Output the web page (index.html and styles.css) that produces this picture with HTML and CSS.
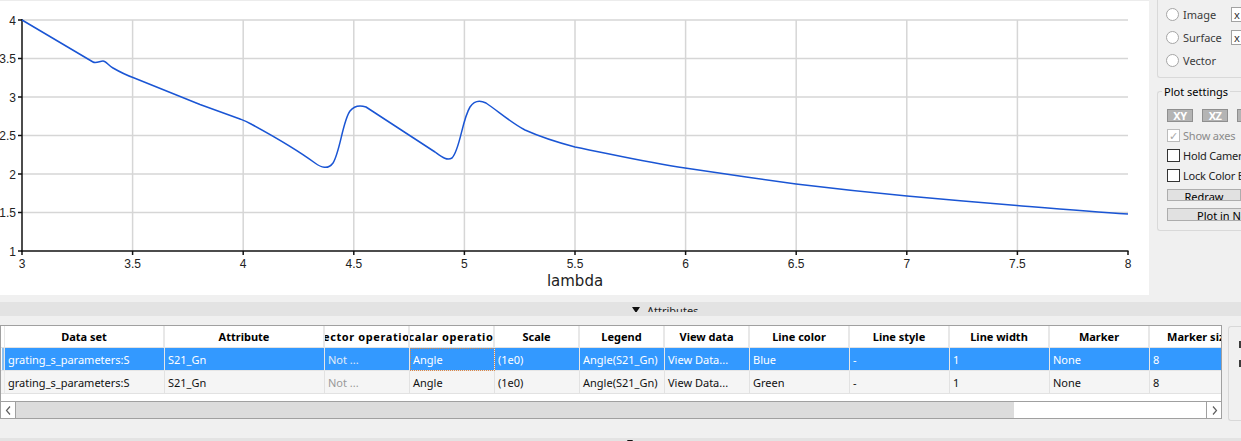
FILE: index.html
```html
<!DOCTYPE html>
<html>
<head>
<meta charset="utf-8">
<link rel="stylesheet" href="styles.css">
</head>
<body>
<div class="top">
  <div class="plot">
    <svg width="1149" height="295" viewBox="0 0 1149 295">
      <line x1="0" y1="0.5" x2="1149" y2="0.5" stroke="#ececec"/>
      <g stroke="#d6d6d6" stroke-width="1.5">
        <line x1="22" y1="20" x2="1128" y2="20"/>
        <line x1="22" y1="58.5" x2="1128" y2="58.5"/>
        <line x1="22" y1="97" x2="1128" y2="97"/>
        <line x1="22" y1="135.5" x2="1128" y2="135.5"/>
        <line x1="22" y1="174" x2="1128" y2="174"/>
        <line x1="22" y1="212.5" x2="1128" y2="212.5"/>
        <line x1="132.6" y1="20" x2="132.6" y2="251"/>
        <line x1="243.2" y1="20" x2="243.2" y2="251"/>
        <line x1="353.8" y1="20" x2="353.8" y2="251"/>
        <line x1="464.4" y1="20" x2="464.4" y2="251"/>
        <line x1="575" y1="20" x2="575" y2="251"/>
        <line x1="685.6" y1="20" x2="685.6" y2="251"/>
        <line x1="796.2" y1="20" x2="796.2" y2="251"/>
        <line x1="906.8" y1="20" x2="906.8" y2="251"/>
        <line x1="1017.4" y1="20" x2="1017.4" y2="251"/>
      </g>
      <g stroke="#111" stroke-width="1.5">
        <line x1="22" y1="19" x2="22" y2="252"/>
        <line x1="21" y1="251" x2="1128.5" y2="251"/>
        <line x1="18" y1="20" x2="22" y2="20"/>
        <line x1="18" y1="58.5" x2="22" y2="58.5"/>
        <line x1="18" y1="97" x2="22" y2="97"/>
        <line x1="18" y1="135.5" x2="22" y2="135.5"/>
        <line x1="18" y1="174" x2="22" y2="174"/>
        <line x1="18" y1="212.5" x2="22" y2="212.5"/>
        <line x1="18" y1="251" x2="22" y2="251"/>
        <line x1="22" y1="251" x2="22" y2="255"/>
        <line x1="132.6" y1="251" x2="132.6" y2="255"/>
        <line x1="243.2" y1="251" x2="243.2" y2="255"/>
        <line x1="353.8" y1="251" x2="353.8" y2="255"/>
        <line x1="464.4" y1="251" x2="464.4" y2="255"/>
        <line x1="575" y1="251" x2="575" y2="255"/>
        <line x1="685.6" y1="251" x2="685.6" y2="255"/>
        <line x1="796.2" y1="251" x2="796.2" y2="255"/>
        <line x1="906.8" y1="251" x2="906.8" y2="255"/>
        <line x1="1017.4" y1="251" x2="1017.4" y2="255"/>
        <line x1="1128" y1="251" x2="1128" y2="255"/>
      </g>
      <g class="ylab" text-anchor="end">
        <text x="16" y="24.5">4</text>
        <text x="16" y="63">3.5</text>
        <text x="16" y="101.5">3</text>
        <text x="16" y="140">2.5</text>
        <text x="16" y="178.5">2</text>
        <text x="16" y="217">1.5</text>
        <text x="16" y="255.5">1</text>
      </g>
      <g class="xlab" text-anchor="middle">
        <text x="22" y="268">3</text>
        <text x="132.6" y="268">3.5</text>
        <text x="243.2" y="268">4</text>
        <text x="353.8" y="268">4.5</text>
        <text x="464.4" y="268">5</text>
        <text x="575" y="268">5.5</text>
        <text x="685.6" y="268">6</text>
        <text x="796.2" y="268">6.5</text>
        <text x="906.8" y="268">7</text>
        <text x="1017.4" y="268">7.5</text>
        <text x="1128" y="268">8</text>
      </g>
      <text class="axtitle" x="575" y="286" text-anchor="middle">lambda</text>
      <path class="curve" d="M22,20 L93,62 C96,63.8 100,61 103,61 C106,61 108,65 113,68 C120,72 126,75 133,77.5 L200,104.5 L240,119 C244,120.5 247,121.5 252,124.5 C275,137 300,152 315,163 C321,167.5 328,170 333,163 C340,152 343,120 350,111 C354,106 360,105 366,107 L435,152 C442,157 447,161 452,158 C460,150 462,120 470,107 C474,101 480,100 486,103 C498,111 510,122 525,130 C545,139 560,143 575,147 C620,156 650,163 685,168 C720,173 760,179 796,184 C833,188.5 870,192.5 907,196 C944,199.5 980,202.5 1017,205.5 C1054,208.5 1090,211.5 1128,214"/>
    </svg>
  </div>
  <div class="side">
    <div class="group g1">
      <div class="opt"><span class="radio"></span><span class="lbl">Image</span><span class="tb">x</span></div>
      <div class="opt"><span class="radio"></span><span class="lbl">Surface</span><span class="tb">x</span></div>
      <div class="opt"><span class="radio"></span><span class="lbl">Vector</span></div>
    </div>
    <div class="group g2">
      <div class="legend">Plot settings</div>
      <div class="views"><span class="vbtn">XY</span><span class="vbtn">XZ</span><span class="vbtn">YZ</span></div>
      <div class="chk dis"><span class="box on">&#10003;</span><span>Show axes</span></div>
      <div class="chk"><span class="box"></span><span>Hold Camera</span></div>
      <div class="chk"><span class="box"></span><span>Lock Color Bar</span></div>
      <div class="btn b1"><span>Redraw</span></div>
      <div class="btn b2"><span>Plot in New Window</span></div>
    </div>
  </div>
</div>
<div class="bottom">
  <div class="bar"><div class="barclip"><span class="tri"></span><span>Attributes</span></div></div>
  <div class="content">
    <div class="grid">
      <div class="rows">
        <div class="row head">
          <div class="c stub"></div>
          <div class="c w160"><span>Data set</span></div>
          <div class="c w160"><span>Attribute</span></div>
          <div class="c w85"><span class="wide">Vector operation</span></div>
          <div class="c w85"><span class="wide">Scalar operation</span></div>
          <div class="c w85"><span>Scale</span></div>
          <div class="c w85"><span>Legend</span></div>
          <div class="c w85"><span>View data</span></div>
          <div class="c w100"><span>Line color</span></div>
          <div class="c w100"><span>Line style</span></div>
          <div class="c w100"><span>Line width</span></div>
          <div class="c w100"><span>Marker</span></div>
          <div class="c w100"><span>Marker size</span></div>
        </div>
        <div class="row sel">
          <div class="c stub"></div>
          <div class="c w160">grating_s_parameters:S</div>
          <div class="c w160">S21_Gn</div>
          <div class="c w85 dim">Not ...</div>
          <div class="c w85 focus">Angle</div>
          <div class="c w85">(1e0)</div>
          <div class="c w85">Angle(S21_Gn)</div>
          <div class="c w85">View Data...</div>
          <div class="c w100">Blue</div>
          <div class="c w100">-</div>
          <div class="c w100">1</div>
          <div class="c w100">None</div>
          <div class="c w100">8</div>
        </div>
        <div class="row alt">
          <div class="c stub"></div>
          <div class="c w160">grating_s_parameters:S</div>
          <div class="c w160">S21_Gn</div>
          <div class="c w85 dim">Not ...</div>
          <div class="c w85">Angle</div>
          <div class="c w85">(1e0)</div>
          <div class="c w85">Angle(S21_Gn)</div>
          <div class="c w85">View Data...</div>
          <div class="c w100">Green</div>
          <div class="c w100">-</div>
          <div class="c w100">1</div>
          <div class="c w100">None</div>
          <div class="c w100">8</div>
        </div>
      </div>
      <div class="hscroll">
        <div class="arrow"><svg width="7" height="9" viewBox="0 0 7 9"><polyline points="5,0.5 1.5,4.5 5,8.5" fill="none" stroke="#606060" stroke-width="1.2"/></svg></div>
        <div class="thumb"></div>
        <div class="track"></div>
        <div class="arrow r"><svg width="7" height="9" viewBox="0 0 7 9"><polyline points="2,0.5 5.5,4.5 2,8.5" fill="none" stroke="#606060" stroke-width="1.2"/></svg></div>
      </div>
    </div>
    <div class="rpanel"><span class="mk"></span><span class="mk"></span></div>
  </div>
  <div class="bar2"><span class="tri2"></span></div>
</div>
</body>
</html>
```

FILE: styles.css
```css
* { box-sizing: border-box; }
html, body { margin: 0; padding: 0; }
body {
  width: 1241px;
  height: 441px;
  overflow: hidden;
  background: #f0f0f0;
  font-family: "Noto Sans", "Open Sans", sans-serif;
  font-size: 11px;
  color: #000;
}

/* ---------- top area ---------- */
.top { display: flex; height: 295px; }
.plot { width: 1149px; background: #fff; flex-shrink: 0; }
.plot svg { display: block; }
.ylab text, .xlab text {
  font-family: "Liberation Sans", Arial, sans-serif;
  font-size: 12px;
  fill: #222;
}
.axtitle {
  font-family: "DejaVu Sans", sans-serif;
  font-size: 15px;
  fill: #222;
}
.curve { fill: none; stroke: #1a55d4; stroke-width: 1.5; stroke-linejoin: round; }

.side { flex: 1; overflow: hidden; padding-left: 8px; }
.group {
  border: 1px solid #d9d9d9;
  border-right: none;
  border-radius: 3px 0 0 3px;
  width: 120px;
  position: relative;
}
.g1 { margin-top: -10px; height: 88px; padding: 12px 0 0 8px; }
.opt { display: flex; align-items: center; height: 23px; color: #3a3a3a; }
.radio {
  width: 13px; height: 13px;
  border: 1px solid #a6a6a6;
  border-radius: 50%;
  background: #fff;
  flex-shrink: 0;
}
.opt .lbl { margin-left: 4px; width: 48px; }
.tb {
  width: 20px; height: 15px;
  border: 1px solid #a2a2a2;
  background: #fff;
  font-size: 11px;
  line-height: 13px;
  padding-left: 2px;
  color: #333;
}

.g2 { margin-top: 13px; height: 140px; padding: 17px 0 0 9px; }
.legend {
  position: absolute;
  top: -8px; left: 4px;
  background: #f0f0f0;
  padding: 0 2px;
  line-height: 16px;
}
.views { display: flex; gap: 9px; height: 14px; }
.vbtn {
  width: 26px; height: 13px;
  background: #b4b4b4;
  border: 1px solid #8f8f8f;
  color: #fff;
  font-weight: bold;
  font-size: 11px;
  line-height: 11px;
  text-align: center;
  letter-spacing: -0.5px;
  overflow: hidden;
  flex-shrink: 0;
}
.chk { display: flex; align-items: center; height: 20px; color: #222; white-space: nowrap; }
.views + .chk { margin-top: 2px; }
.box {
  width: 13px; height: 13px;
  border: 1px solid #333;
  background: #fff;
  margin-right: 3px;
  flex-shrink: 0;
  font-size: 11px;
  line-height: 11px;
  text-align: center;
}
.chk span + span { letter-spacing: -0.2px; }
.dis { color: #8a8a8a; }
.dis .box { border-color: #bcbcbc; color: #a8a8a8; }
.btn {
  background: #e1e1e1;
  border: 1px solid #adadad;
  overflow: hidden;
  white-space: nowrap;
}
.b1 { width: 74px; height: 12px; margin-top: 4px; text-align: center; line-height: 13px; }
.b2 { width: 150px; height: 13px; margin-top: 7px; padding-left: 29px; line-height: 14px; }

/* ---------- bottom area ---------- */
.bottom { display: flex; flex-direction: column; }
.bar { margin-top: 7px; height: 14px; background: #e3e3e3; padding-left: 632px; }
.barclip {
  height: 10px;
  overflow: hidden;
  line-height: 16px;
  padding-top: 1px;
  white-space: nowrap;
  color: #222;
  display: flex;
  align-items: flex-start;
}
.tri {
  width: 0; height: 0;
  border-left: 4.5px solid transparent;
  border-right: 4.5px solid transparent;
  border-top: 6px solid #111;
  margin-top: 4px;
  margin-right: 7px;
}
.content { display: flex; margin-top: 9px; }
.grid {
  width: 1222px;
  height: 94px;
  border: 1px solid #a0a0a0;
  background: #fff;
  display: flex;
  flex-direction: column;
  flex-shrink: 0;
}
.rows { flex: 1; overflow: hidden; }
.row { display: flex; height: 23px; }
.row.head { height: 22px; background: #fff; }
.c {
  flex-shrink: 0;
  height: 100%;
  border-right: 1px solid #e2e2e2;
  border-bottom: 1px solid #e2e2e2;
  padding: 2px 0 0 3px;
  line-height: 20px;
  white-space: nowrap;
  overflow: hidden;
}
.stub { width: 4px; padding: 0; border-right: 1px solid #e8e8e8; }
.w160 { width: 160px; }
.w85 { width: 85px; }
.w100 { width: 100px; }
.head .c {
  font-weight: bold;
  display: flex;
  justify-content: center;
  padding: 1px 0 0 0;
  border-right: 2px solid #e8e8e8;
}
.head .c span { flex-shrink: 0; }
.head .c .wide { letter-spacing: 0.6px; }
.head .stub { border-right: 1px solid #e8e8e8; }
.sel .c { background: #3399ff; color: #fff; border-color: #e6e6e6; }
.sel .stub { background: #fff; box-shadow: inset -2px 0 0 #8cc2f2; }
.sel .dim { color: #e2ecf7; }
.sel .focus { outline: 1px dotted #d9874a; outline-offset: -1px; }
.alt .c { background: #f5f5f5; color: #111; }
.alt .dim { color: #9a9a9a; }

.hscroll {
  height: 17px;
  border-top: 1px solid #a0a0a0;
  display: flex;
}
.arrow {
  width: 15px;
  background: #fff;
  border-right: 1px solid #a0a0a0;
  display: flex;
  align-items: center;
  justify-content: center;
  flex-shrink: 0;
}
.arrow.r { border-right: none; border-left: 1px solid #a0a0a0; width: 15px; }
.thumb { width: 998px; background: #dcdcdc; flex-shrink: 0; }
.track { flex: 1; background: #fff; }

.rpanel {
  margin-left: 6px;
  margin-top: 1px;
  flex: 1;
  height: 95px;
  border: 1px solid #d8d8d8;
  border-right: none;
  border-radius: 3px 0 0 3px;
  display: flex;
  flex-direction: column;
  align-items: flex-end;
  padding-top: 14px;
  gap: 12px;
}
.mk { width: 2px; height: 7px; background: #3c3c3c; }

.bar2 { margin-top: 17px; height: 5px; background: #e3e3e3; padding: 2px 0 0 627px; overflow: hidden; }
.tri2 {
  display: block;
  width: 0; height: 0;
  border-left: 3.5px solid transparent;
  border-right: 3.5px solid transparent;
  border-top: 5px solid #111;
}
```
